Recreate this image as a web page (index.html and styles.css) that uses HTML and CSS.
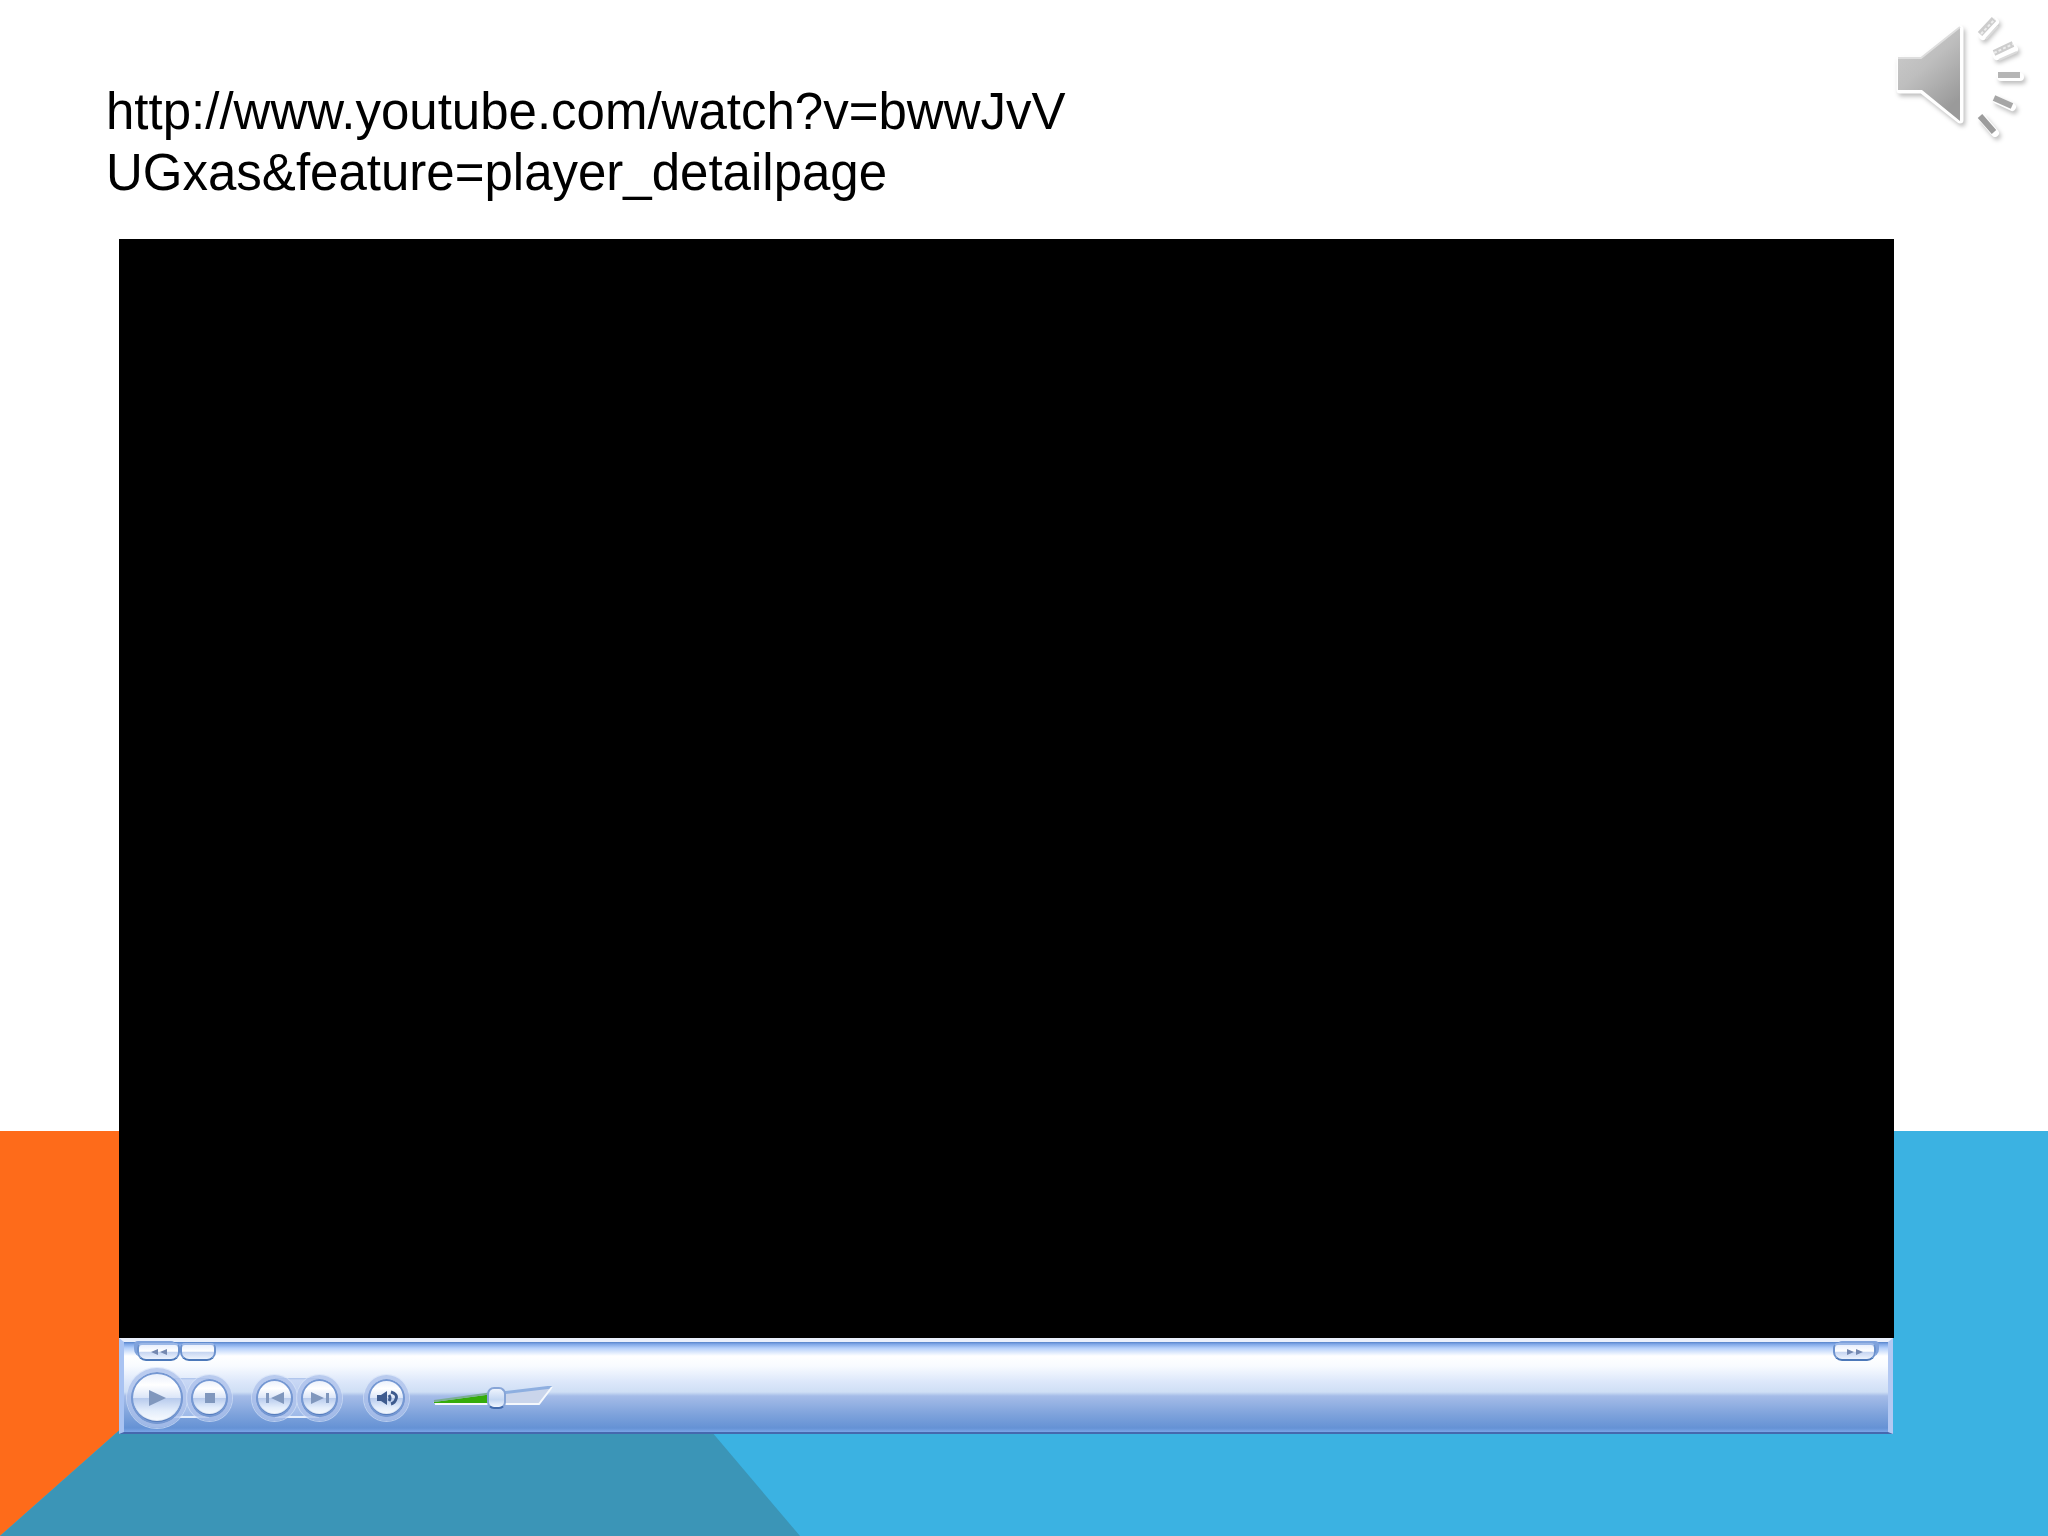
FILE: index.html
```html
<!DOCTYPE html>
<html lang="en">
<head>
    <meta charset="UTF-8">
    <meta name="viewport" content="width=device-width, initial-scale=1.0">
    <title>Video</title>
    <link rel="stylesheet" href="styles.css">
</head>
<body>

<main class="slide">

    <!-- Coloured shapes along the bottom -->
    <svg class="backdrop" viewBox="0 0 2048 405" preserveAspectRatio="none" aria-hidden="true">
        <rect width="2048" height="405" fill="#3bb2e2"/>
        <polygon points="0,0 457,0 0,405" fill="#fe6b1a"/>
        <polygon points="0,405 457,0 800,405" fill="#3b95b7"/>
    </svg>

    <div class="content">
        <header>
            <a class="video-link" href="http://www.youtube.com/watch?v=bwwJvVUGxas&amp;feature=player_detailpage">http://www.youtube.com/watch?v=bwwJvVUGxas&amp;feature=player_detailpage</a>

            <button class="sound" aria-label="Play sound">
                <svg width="178" height="160" viewBox="0 0 178 160">
                    <defs>
                        <linearGradient id="cone" x1="0" y1="0" x2="0.6" y2="1">
                            <stop offset="0" stop-color="#cfcfcf"/>
                            <stop offset="0.5" stop-color="#bebebe"/>
                            <stop offset="1" stop-color="#9a9a9a"/>
                        </linearGradient>
                    </defs>
                    <g class="raised" stroke-linejoin="round" stroke-linecap="round">
                        <path d="M30 60H52L90 29V120L52 90H30Z" fill="#fff" stroke="#fff" stroke-width="7"/>
                        <path d="M113 36L125 22M127 56L144 49M131 77H150M127 100L142 107M113 119L125 133" stroke="#fff" stroke-width="8"/>
                    </g>
                    <path d="M28 58H51L90 27V121L52 90H28Z" fill="url(#cone)"/>
                    <path d="M28 58H51L90 27" fill="none" stroke="#dedede" stroke-width="2"/>
                    <g stroke-width="6">
                        <path d="M110 34L124 19M124 53L143 44" stroke="#cdcdcd"/>
                        <path d="M128 75H150" stroke="#b5b5b5"/>
                        <path d="M124 98L142 106" stroke="#a6a6a6"/>
                        <path d="M110 116L124 132" stroke="#9c9c9c"/>
                    </g>
                    <path d="M111 34L125 19M124 53L143 44" stroke="#ececec" stroke-width="2" stroke-dasharray="3 2"/>
                    <path d="M116 39L128 26M129 60L147 52" stroke="#dadada" stroke-width="2"/>
                </svg>
            </button>
        </header>

        <!-- Player -->
        <section class="player">
            <video class="screen"></video>

            <div class="control-bar">
                <div class="seek-row">
                    <button class="pill pill-left" aria-label="Rewind">
                        <svg width="16" height="6" viewBox="0 0 16 6"><path d="M7 0V6L0 3ZM16 0V6L9 3Z" fill="#7488b0"/></svg>
                    </button>
                    <input class="seek" type="range" min="0" max="100" value="0" aria-label="Seek">
                    <button class="pill pill-right" aria-label="Fast forward">
                        <svg width="16" height="6" viewBox="0 0 16 6"><path d="M0 0L7 3L0 6ZM9 0L16 3L9 6Z" fill="#7488b0"/></svg>
                    </button>
                </div>

                <div class="button-row">
                    <div class="pod pod-play">
                        <button class="round round-big" aria-label="Play">
                            <svg width="18" height="18" viewBox="0 0 18 18"><path d="M1 1L18 9L1 17Z" fill="#8097bd"/></svg>
                        </button>
                        <button class="round" aria-label="Stop">
                            <svg width="10" height="10" viewBox="0 0 10 10"><rect width="10" height="10" fill="#8097bd"/></svg>
                        </button>
                    </div>
                    <div class="pod">
                        <button class="round" aria-label="Previous">
                            <svg width="18" height="12" viewBox="0 0 18 12"><path d="M0 1H3V11H0ZM18 0V12L5 6Z" fill="#8097bd"/></svg>
                        </button>
                        <button class="round" aria-label="Next">
                            <svg width="18" height="12" viewBox="0 0 18 12"><path d="M15 1H18V11H15ZM0 0L13 6L0 12Z" fill="#8097bd"/></svg>
                        </button>
                    </div>
                    <button class="round" aria-label="Mute">
                        <svg width="22" height="16" viewBox="0 0 22 16">
                            <path d="M1 5H5L11 1V15L5 11H1Z" fill="#3e5b8e"/>
                            <path d="M13 5Q15 8 13 11M15 2Q22 4 20 9Q19 13 15 14" fill="none" stroke="#3e5b8e" stroke-width="3"/>
                        </svg>
                    </button>
                    <div class="volume">
                        <svg width="120" height="24" viewBox="0 0 120 24" aria-hidden="true">
                            <path d="M0 16L119 0L106 18H2Z" fill="#cad5eb"/>
                            <path d="M60 8L119 1" stroke="#8eafe0" stroke-width="3"/>
                            <path d="M1 16L60 8V17H1Z" fill="#35ac0b"/>
                            <path d="M1 15L60 7" stroke="#7bae94" stroke-width="2"/>
                            <path d="M2 18H106L119 1" fill="none" stroke="#f5f8fc" stroke-width="2"/>
                        </svg>
                        <input class="volume-slider" type="range" min="0" max="100" value="53" aria-label="Volume">
                    </div>
                </div>
            </div>
        </section>
    </div>

</main>

</body>
</html>
```
FILE: styles.css
```css
* {
    margin: 0;
    padding: 0;
    box-sizing: border-box;
}

body {
    font-family: "Liberation Sans", Arial, sans-serif;
    background-color: #fff;
    color: #000;
}

button {
    border: none;
    background: none;
    cursor: pointer;
}

svg {
    display: block;
}

/* Backdrop and content share one grid cell */
.slide {
    display: grid;
    grid-template-columns: 1fr;
    min-height: 100vh;
}

.backdrop,
.content {
    grid-area: 1 / 1;
}

.backdrop {
    align-self: end;
    width: 100%;
    height: 405px;
}

.content {
    z-index: 1;
}

header {
    display: flex;
    justify-content: space-between;
    align-items: flex-start;
    padding-left: 106px;
    min-height: 239px;
}

.video-link {
    max-width: 980px;
    padding-top: 81px;
    color: inherit;
    font-size: 51px;
    line-height: 61px;
    text-decoration: none;
    word-break: break-all;
}

.raised {
    filter: drop-shadow(2px 3px 2px rgba(0, 0, 0, 0.25));
}

/* Player */
.player {
    margin: 0 154px 0 119px;
}

.screen {
    display: block;
    width: 100%;
    aspect-ratio: 1775 / 1099;
    background-color: #000;
}

.control-bar {
    height: 96px;
    margin-right: 1px;
    border-style: solid;
    border-width: 4px 5px 2px 5px;
    border-color: #e9effb #b3c9f3 #4668ae #a9c3f2;
    background: linear-gradient(#5583c9 0, #7ea6e6 2px, #b4cffa 6px, #fff 14px, #f8fbff 24px, #dce7fa 40px, #cfdff5 50px, #a5bce8 54px, #7fa3dc 72px, #6592d5 86px, #7ba6e8 100%);
}

.seek-row {
    display: flex;
    height: 20px;
    padding: 1px 12px 0 13px;
}

.pill,
.seek::-webkit-slider-thumb {
    height: 18px;
    border: 2px solid #6b91cd;
    border-top-color: #9bb7e6;
    border-bottom-color: #4c78b9;
    border-radius: 5px 5px 9px 9px;
    background: linear-gradient(#e9f0fd 0, #fff 45%, #c5d4f1 50%, #edf3fd 100%);
}

.pill {
    display: flex;
    justify-content: center;
    align-items: center;
    width: 43px;
}

.pill-left {
    box-shadow: -4px -3px 0 -1px #7fa2dc;
}

.pill-right {
    box-shadow: 4px -3px 0 -1px #7fa2dc;
}

.seek {
    flex: 1;
    height: 18px;
    appearance: none;
    background: none;
}

.seek::-webkit-slider-thumb {
    appearance: none;
    width: 36px;
}

.button-row {
    display: flex;
    align-items: center;
    height: 72px;
    padding-left: 3px;
}

.pod {
    display: flex;
    margin: 0 22px 0 20px;
    align-items: center;
    background: linear-gradient(#a9c0ea 0, #c9d8f5 2px, #b9ccef 50%, #9db9e8 38px, #e6effc 38px) center / calc(100% - 46px) 40px no-repeat;
}

.pod-play {
    margin: 0;
}

.round {
    display: flex;
    justify-content: center;
    align-items: center;
    width: 45px;
    height: 46px;
    border: 4px solid rgba(174, 194, 235, 0.8);
    border-radius: 50%;
    background: linear-gradient(#e6edfb 0, #fff 25%, #dce6f8 49%, #b8cbed 51%, #e3edfb 75%, #fff 100%) padding-box;
    box-shadow: inset 0 0 0 2px #7598d3, inset 0 -2px 1px 1px #456fb5, 0 0 0 1px rgba(214, 226, 248, 0.7);
}

.round-big {
    width: 60px;
    height: 60px;
}

.volume {
    display: grid;
    align-items: center;
    width: 120px;
    margin-left: 24px;
}

.volume svg,
.volume-slider {
    grid-area: 1 / 1;
}

.volume-slider {
    width: 120px;
    height: 24px;
    appearance: none;
    background: none;
}

.volume-slider::-webkit-slider-thumb {
    appearance: none;
    width: 19px;
    height: 22px;
    border: 2px solid #87a5d7;
    border-bottom-color: #426bad;
    border-radius: 7px;
    background: linear-gradient(#edf3fd, #c4d7f2 60%, #f0f6ff);
}
```
